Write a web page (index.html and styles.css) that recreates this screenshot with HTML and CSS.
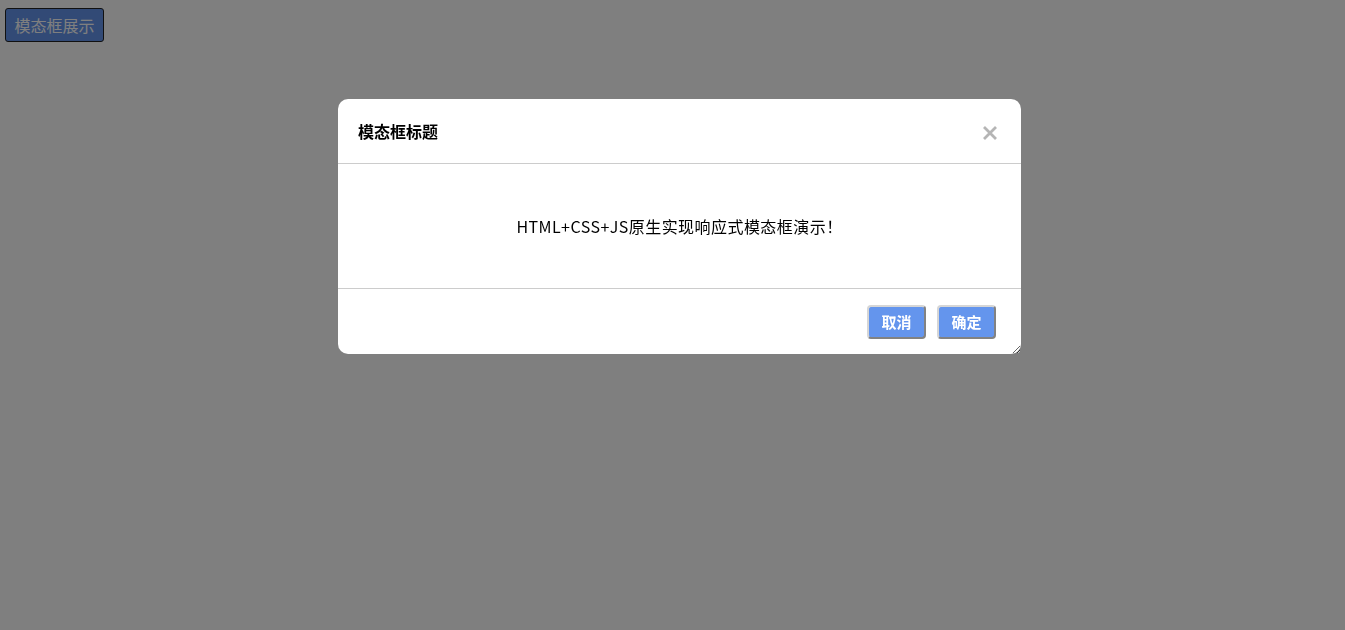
FILE: index.html
```html
<!DOCTYPE html>
<html lang="zh">
<head>
<meta charset="utf-8">
<title>模态框</title>
<link rel="stylesheet" href="styles.css">
</head>
<body>
<button class="open-btn">模态框展示</button>
<div class="overlay">
  <div class="modal">
    <div class="modal-header">
      <span class="modal-title">模态框标题</span>
      <svg class="modal-close" width="16" height="16" viewBox="0 0 16 16" aria-label="关闭">
        <path d="M2 2 L14 14 M14 2 L2 14" stroke="#b5b5b5" stroke-width="2.8" stroke-linecap="butt" fill="none"/>
      </svg>
    </div>
    <div class="modal-body">HTML+CSS+JS原生实现响应式模态框演示！</div>
    <div class="modal-footer">
      <button class="btn">取消</button>
      <button class="btn">确定</button>
    </div>
  </div>
</div>
</body>
</html>
```
FILE: styles.css
```css
html, body {
  margin: 0;
  padding: 0;
  height: 100%;
  font-family: "Noto Sans CJK SC", "Liberation Sans", sans-serif;
}
body {
  padding: 8px 5px;
  box-sizing: border-box;
}
.open-btn {
  display: block;
  height: 34px;
  width: 99px;
  padding: 0;
  font-size: 16px;
  line-height: 30px;
  color: #fff;
  background: #6495ed;
  border: 1px solid #222;
  border-radius: 3px;
  font-family: inherit;
}
.overlay {
  position: fixed;
  inset: 0;
  background: rgba(0, 0, 0, 0.5);
}
.modal {
  position: absolute;
  left: 338px;
  top: 99px;
  width: 683px;
  height: 255px;
  background: #fff;
  border-radius: 10px;
  overflow: auto;
  resize: both;
  display: flex;
  flex-direction: column;
}
.modal-header {
  height: 65px;
  flex: none;
  display: flex;
  align-items: center;
  justify-content: space-between;
  padding: 0 23px 0 20px;
  border-bottom: 1px solid #ccc;
  box-sizing: border-box;
}
.modal-title {
  font-size: 16px;
  font-weight: bold;
  color: #000;
}
.modal-close {
  display: block;
  margin-top: 4px;
}
.modal-body {
  flex: none;
  display: flex;
  align-items: center;
  justify-content: center;
  font-size: 16px;
  letter-spacing: 0.45px;
  color: #000;
  border-bottom: 1px solid #ccc;
  box-sizing: border-box;
  height: 125px;
}
.modal-footer {
  flex: 1;
  display: flex;
  align-items: center;
  justify-content: flex-end;
  gap: 11px;
  padding: 0 25px 0 0;
}
.btn {
  width: 59px;
  height: 34px;
  padding: 0;
  font-size: 15px;
  font-weight: bold;
  font-family: inherit;
  color: #fff;
  background: #6495ed;
  border: 2px outset #d6d6d6;
  border-radius: 4px;
}
```
